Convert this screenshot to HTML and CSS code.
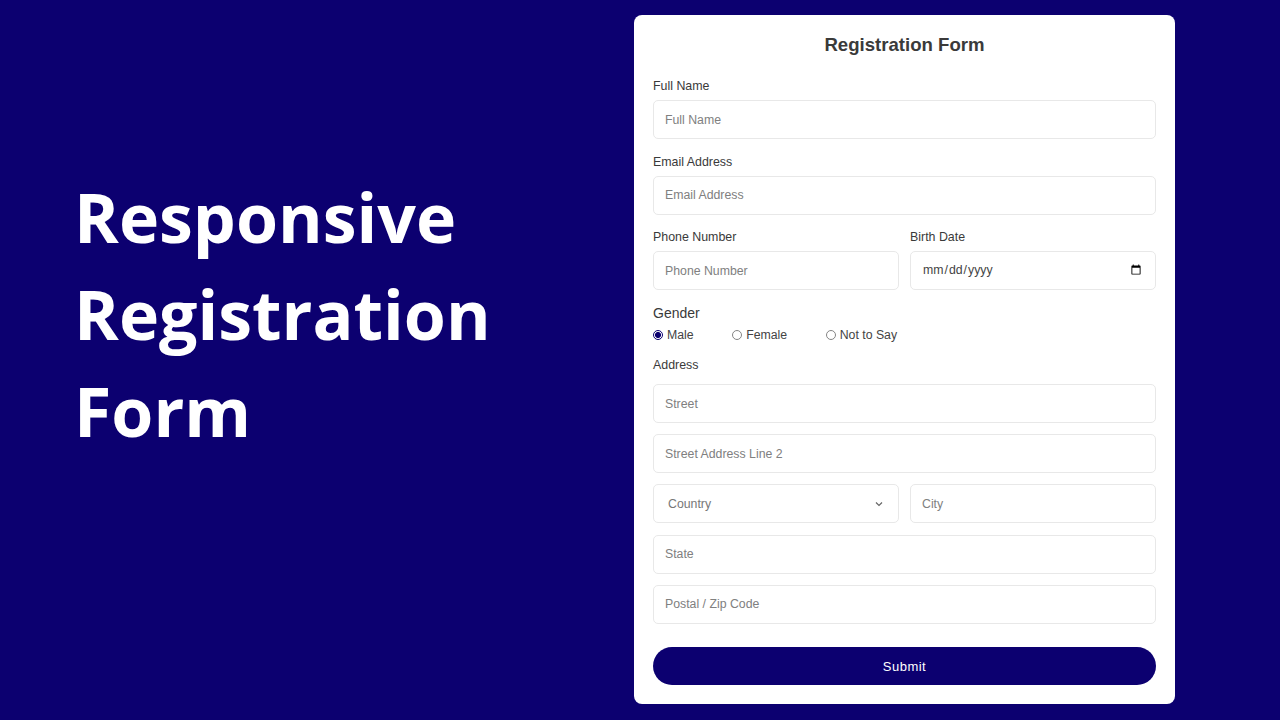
FILE: index.html
```html
<!DOCTYPE html>
<html lang="en">
<head>
    <meta charset="UTF-8">
    <meta name="viewport" content="width=device-width, initial-scale=1.0">
    <title>Responsive Registration Form</title>
    <link rel="stylesheet" href="styles.css">
</head>
<body>
    <div class="page">
        <h1 class="headline">Responsive<br>Registration<br>Form</h1>

        <form class="card">
            <h2 class="card-title">Registration Form</h2>

            <div class="form-group">
                <label for="nama">Full Name</label>
                <input type="text" id="nama" placeholder="Full Name">
            </div>

            <div class="form-group">
                <label for="email">Email Address</label>
                <input type="text" id="email" placeholder="Email Address">
            </div>

            <div class="form-row">
                <div class="form-group">
                    <label for="phone">Phone Number</label>
                    <input type="text" id="phone" placeholder="Phone Number">
                </div>
                <div class="form-group">
                    <label for="birth">Birth Date</label>
                    <input type="date" id="birth">
                </div>
            </div>

            <div class="gender-title">Gender</div>
            <div class="gender-options">
                <label class="radio"><input type="radio" name="gender" checked>Male</label>
                <label class="radio"><input type="radio" name="gender">Female</label>
                <label class="radio"><input type="radio" name="gender">Not to Say</label>
            </div>

            <label class="address-title" for="street">Address</label>
            <div class="address-fields">
                <input type="text" id="street" placeholder="Street">
                <input type="text" placeholder="Street Address Line 2">
                <div class="form-row">
                    <select>
                        <option>Country</option>
                    </select>
                    <input type="text" placeholder="City">
                </div>
                <input type="text" placeholder="State">
                <input type="text" placeholder="Postal / Zip Code">
            </div>

            <button type="button" class="submit">Submit</button>
        </form>
    </div>
</body>
</html>
```

FILE: styles.css
```css
* {
    box-sizing: border-box;
}
body {
    margin: 0;
    background-color: #0c0070;
    font-family: "Liberation Sans", Arial, sans-serif;
}
.page {
    display: flex;
    align-items: flex-start;
    height: 720px;
    overflow: hidden;
}
.headline {
    width: 634px;
    margin: 168px 0 0;
    padding-left: 74px;
    color: #fff;
    font-family: "Open Sans", sans-serif;
    font-size: 68px;
    font-weight: 700;
    line-height: 97px;
}
.card {
    width: 541px;
    margin-top: 15px;
    padding: 19px;
    background-color: #fff;
    border-radius: 8px;
}
.card-title {
    margin: 0 0 22px;
    color: #3a3a3a;
    font-size: 18.6px;
    line-height: 22px;
    text-align: center;
}
.form-group {
    margin-bottom: 14.5px;
}
.form-group label,
.address-title {
    display: block;
    margin-bottom: 6px;
    color: #3a3a3a;
    font-size: 12.4px;
    line-height: 16px;
}
input[type="text"],
input[type="date"],
select {
    width: 100%;
    height: 39px;
    padding: 0 11px;
    background-color: #fff;
    border: 1px solid #e8e8e8;
    border-radius: 5px;
    color: #444;
    font-family: inherit;
    font-size: 12.3px;
    outline: none;
}
input::placeholder {
    color: #808080;
}
select {
    appearance: none;
    padding-left: 14px;
    color: #777;
    background-image: url("data:image/svg+xml,%3Csvg xmlns='http://www.w3.org/2000/svg' width='8' height='6' viewBox='0 0 8 6'%3E%3Cpath d='M1 1.5l3 3 3-3' fill='none' stroke='%23666' stroke-width='1.2'/%3E%3C/svg%3E");
    background-repeat: no-repeat;
    background-position: right 15px center;
}
.form-row {
    display: grid;
    grid-template-columns: 1fr 1fr;
    gap: 11px;
}
.gender-title {
    margin-top: 0.5px;
    color: #3a3a3a;
    font-size: 14px;
    line-height: 17px;
}
.gender-options {
    display: flex;
    gap: 38.5px;
    margin-top: 5.5px;
}
.radio {
    display: flex;
    align-items: center;
    color: #444;
    font-size: 12.3px;
    line-height: 15px;
}
.radio input {
    appearance: none;
    width: 10px;
    height: 10px;
    margin: 0 4px 0 0;
    background-color: #fff;
    border: 1px solid #858585;
    border-radius: 50%;
}
.radio input:checked {
    border-color: #0c0070;
    background-image: radial-gradient(circle, #0c0070 2.7px, #fff 3.3px);
}
.address-title {
    margin: 14.5px 0 11px;
}
.address-fields {
    display: flex;
    flex-direction: column;
    gap: 11.2px;
}
.submit {
    display: block;
    width: 100%;
    height: 38.5px;
    margin-top: 23px;
    background-color: #0c0070;
    border: none;
    border-radius: 20px;
    color: #fff;
    font-family: inherit;
    font-size: 13px;
    letter-spacing: 0.5px;
}
```
